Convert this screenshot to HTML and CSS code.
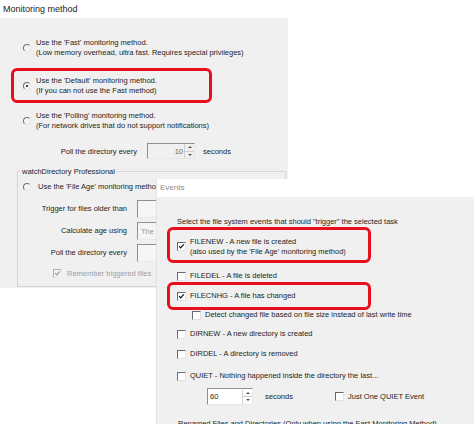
FILE: index.html
```html
<!DOCTYPE html>
<html lang="en">
<head>
  <meta charset="UTF-8">
  <title>Monitoring method / Events</title>
  <link rel="stylesheet" href="styles.css">
</head>
<body>
  <div class="desk">
    <!-- Monitoring method dialog -->
    <div class="monitor">
      <div class="title">Monitoring method</div>
      <div class="panel">
        <div class="option">
          <span class="radio"></span>
          <div class="label">Use the 'Fast' monitoring method.<br>(Low memory overhead, ultra fast. Requires special privileges)</div>
        </div>
        <div class="option mark">
          <span class="radio on"></span>
          <div class="label">Use the 'Default' monitoring method.<br>(If you can not use the Fast method)</div>
        </div>
        <div class="option third">
          <span class="radio"></span>
          <div class="label">Use the 'Polling' monitoring method.<br>(For network drives that do not support notifications)</div>
        </div>
        <div class="poll-row">
          <span class="poll-label">Poll the directory every</span>
          <div class="spin-box off">
            <span class="spin-value">10</span>
            <span class="spin-btns"><span class="up"></span><span class="down"></span></span>
          </div>
          <span class="unit">seconds</span>
        </div>

        <fieldset class="pro">
          <legend>watchDirectory Professional</legend>
          <div class="age-row">
            <span class="radio"></span>
            <span>Use the 'File Age' monitoring method</span>
          </div>
          <div class="field-row first">
            <span class="field-label">Trigger for files older than</span>
            <span class="field"></span>
          </div>
          <div class="field-row">
            <span class="field-label">Calculate age using</span>
            <span class="field muted">The last write time</span>
          </div>
          <div class="field-row">
            <span class="field-label">Poll the directory every</span>
            <span class="field"></span>
          </div>
          <div class="remember">
            <span class="check off"><svg viewBox="0 0 8 8"><path d="M1.3 3.6 L3.1 5.6 L6.6 1.6" fill="none" stroke="#9a9a9a" stroke-width="1.4"/></svg></span>
            <span>Remember triggered files</span>
          </div>
        </fieldset>
      </div>
    </div>

    <!-- Events dialog, lying over the first one -->
    <div class="events">
      <div class="title">Events</div>
      <div class="body">
        <div class="intro">Select the file system events that should "trigger" the selected task</div>

        <div class="chk-row mark tall">
          <span class="check"><svg viewBox="0 0 8 8"><path d="M1.3 3.6 L3.1 5.6 L6.6 1.6" fill="none" stroke="#111" stroke-width="1.4"/></svg></span>
          <div>FILENEW - A new file is created<br>(also used by the 'File Age' monitoring method)</div>
        </div>
        <div class="chk-row del">
          <span class="check"></span>
          <span>FILEDEL - A file is deleted</span>
        </div>
        <div class="chk-row mark">
          <span class="check"><svg viewBox="0 0 8 8"><path d="M1.3 3.6 L3.1 5.6 L6.6 1.6" fill="none" stroke="#111" stroke-width="1.4"/></svg></span>
          <span>FILECNHG - A file has changed</span>
        </div>
        <div class="chk-row sub">
          <span class="check"></span>
          <span>Detect changed file based on file size instead of last write time</span>
        </div>
        <div class="chk-row dirnew">
          <span class="check"></span>
          <span>DIRNEW - A new directory is created</span>
        </div>
        <div class="chk-row dirdel">
          <span class="check"></span>
          <span>DIRDEL - A directory is removed</span>
        </div>
        <div class="chk-row quiet">
          <span class="check"></span>
          <span>QUIET - Nothing happened inside the directory the last...</span>
        </div>
        <div class="quiet-row">
          <div class="spin-box white">
            <span class="spin-value left">60</span>
            <span class="spin-btns"><span class="up"></span><span class="down"></span></span>
          </div>
          <span class="unit">seconds</span>
          <span class="check"></span>
          <span>Just One QUIET Event</span>
        </div>
        <div class="renamed">Renamed Files and Directories (Only when using the Fast Monitoring Method)</div>
      </div>
    </div>
  </div>
</body>
</html>
```

FILE: styles.css
```css
body {
  margin: 0;
  background: #fff;
  font-family: "Liberation Sans", Arial, sans-serif;
  font-size: 7.5px;
  color: #1e1e1e;
}
.desk {
  position: relative;
  width: 474px;
  height: 424px;
  overflow: hidden;
}

/* left dialog */
.monitor {
  width: 288px;
}
.monitor .title {
  height: 18px;
  line-height: 18px;
  padding-left: 3px;
  font-size: 9px;
  color: #222;
}
.panel {
  height: 270px;
  box-sizing: border-box;
  padding-top: 20px;
  background: #f0f0f0;
}
.option {
  display: flex;
  align-items: center;
  margin-left: 23px;
  line-height: 9.5px;
}
.option .radio {
  margin-right: 5px;
}
.option.mark {
  width: 177px;
  margin: 11px 0 0 11px;
  padding: 5px 9px;
  border: 3px solid #e8101a;
  border-radius: 6px;
}
.option.third {
  margin-top: 8px;
}

.radio {
  position: relative;
  flex: none;
  width: 6px;
  height: 6px;
  border: 1px solid;
  border-color: #707070 #e6e6e6 #e6e6e6 #707070;
  border-radius: 50%;
  background: #f4f4f4;
}
.radio.on::after {
  content: "";
  position: absolute;
  left: 2px;
  top: 2px;
  width: 2px;
  height: 2px;
  border-radius: 50%;
  background: #111;
}

.check {
  flex: none;
  width: 7px;
  height: 7px;
  border: 1px solid;
  border-color: #6a6a6a #e2e2e2 #e2e2e2 #6a6a6a;
  background: #fff;
}
.check svg {
  display: block;
  width: 7px;
  height: 7px;
}
.check.off {
  border-color: #b0b0b0 #ececec #ececec #b0b0b0;
  background: #f0f0f0;
}

.poll-row {
  display: flex;
  align-items: center;
  height: 16px;
  margin-top: 13px;
}
.poll-label {
  width: 137px;
  text-align: right;
}
.spin-box {
  display: flex;
  align-items: center;
  box-sizing: border-box;
  height: 16px;
  border: 1px solid;
  border-color: #8f8f8f #e8e8e8 #e8e8e8 #8f8f8f;
}
.spin-box.off {
  width: 48px;
  margin-left: 10px;
  background: #f0f0f0;
  color: #6a6a6a;
}
.spin-value {
  flex: 1;
  text-align: right;
  padding-right: 1px;
}
.spin-value.left {
  text-align: left;
  padding-left: 2px;
}
.spin-btns {
  display: flex;
  flex-direction: column;
  width: 9px;
  height: 14px;
  border-left: 1px solid #d0d0d0;
}
.spin-btns span {
  flex: 1;
  display: flex;
  align-items: center;
  justify-content: center;
}
.spin-btns .up {
  border-bottom: 1px solid #d0d0d0;
}
.spin-btns .up::before,
.spin-btns .down::before {
  content: "";
  border-left: 2px solid transparent;
  border-right: 2px solid transparent;
}
.spin-btns .up::before {
  border-bottom: 2px solid #555;
}
.spin-btns .down::before {
  border-top: 2px solid #555;
}
.unit {
  margin-left: 8px;
}

.pro {
  margin: 8px 2px 0 17px;
  padding: 0 0 7px 3px;
  min-width: 0;
  border: 1px solid #d6d6d6;
  line-height: 9.5px;
}
.pro legend {
  padding: 0 2px;
  margin-left: -1px;
}
.age-row {
  display: flex;
  align-items: center;
  height: 10px;
  margin: 5px 0 0 2px;
  white-space: nowrap;
}
.age-row .radio {
  margin-right: 7px;
}
.field-row {
  display: flex;
  align-items: center;
  margin-top: 4px;
}
.field-row.first {
  margin-top: 8px;
}
.field-label {
  width: 106px;
  text-align: right;
}
.field {
  box-sizing: border-box;
  width: 60px;
  height: 18px;
  margin-left: 10px;
  padding: 4px 0 0 3px;
  border: 1px solid;
  border-color: #8f8f8f #e8e8e8 #e8e8e8 #8f8f8f;
  background: #f5f5f5;
  white-space: nowrap;
  overflow: hidden;
}
.field.muted {
  color: #9a9a9a;
}
.remember {
  display: flex;
  align-items: center;
  gap: 5px;
  height: 10px;
  margin: 7px 0 0 32px;
  color: #a0a0a0;
}

/* Events dialog */
.events {
  position: absolute;
  left: 156px;
  top: 179px;
  right: 0;
  bottom: 0;
  border-left: 1px solid #e4e4e4;
  background: #f0f0f0;
}
.events .title {
  height: 18px;
  line-height: 18px;
  padding-left: 3px;
  font-size: 8px;
  color: #8a8a8a;
  background: #fff;
}
.events .body {
  padding-left: 10px;
  line-height: 9.5px;
}
.intro {
  margin: 20px 0 0 10px;
}
.chk-row {
  display: flex;
  align-items: center;
  gap: 4px;
  height: 10px;
  margin-left: 10px;
  white-space: nowrap;
}
.chk-row.mark {
  width: 184px;
  margin: 1px 0 0;
  padding: 6px 7px;
  border: 3px solid #e8101a;
  border-radius: 6px;
}
.chk-row.mark.tall {
  height: 19px;
  padding: 7px 7px 4px;
  margin-top: 0.5px;
}
.chk-row.del {
  margin-top: 8px;
}
.chk-row.sub {
  margin-left: 25px;
}
.chk-row.dirnew {
  margin-top: 9px;
}
.chk-row.dirdel {
  margin-top: 10px;
}
.chk-row.quiet {
  margin-top: 12px;
}
.quiet-row {
  display: flex;
  align-items: center;
  gap: 4px;
  height: 17px;
  margin: 7px 0 0 40px;
}
.spin-box.white {
  width: 46px;
  height: 17px;
  background: #fff;
}
.quiet-row .unit {
  width: 66px;
  margin-left: 8px;
}
.renamed {
  margin: 14px 0 0 11px;
  white-space: nowrap;
}
```
